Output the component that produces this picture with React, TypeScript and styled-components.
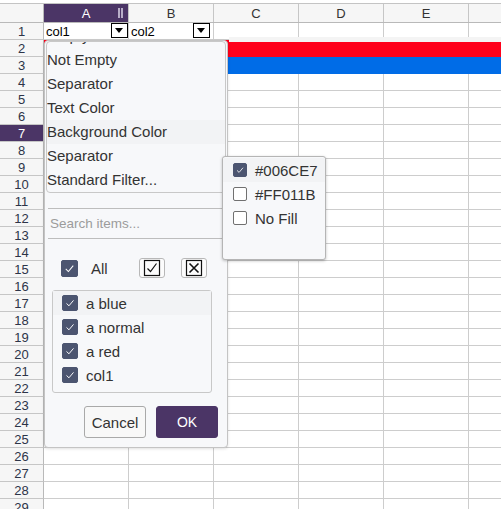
import { FC } from 'react';
import styled, { createGlobalStyle } from 'styled-components';

const GlobalStyle = createGlobalStyle`
  html, body {
    margin: 0;
    padding: 0;
    background: #fff;
  }
  body {
    font-family: "Liberation Sans", Arial, sans-serif;
    overflow: hidden;
  }
  * {
    box-sizing: border-box;
  }
`;

const COLUMNS = ['A', 'B', 'C', 'D', 'E', ''];
const ROW_COUNT = 29;
const ROW_FILLS: Record<number, string> = { 2: '#ff011b', 3: '#006ce7' };
const MENU_ITEMS = ['Empty', 'Not Empty', 'Separator', 'Text Color', 'Background Color', 'Separator', 'Standard Filter...'];
const VALUES = ['a blue', 'a normal', 'a red', 'col1'];
const COLORS = [
  { label: '#006CE7', checked: true },
  { label: '#FF011B', checked: false },
  { label: 'No Fill', checked: false },
];

const CheckMark: FC<{ size: number }> = ({ size }) => (
  <svg width={size} height={size} viewBox="0 0 16 16">
    <polyline points="4,8.5 6.8,11.2 12,5" fill="none" stroke="#fff" strokeWidth="1.1" />
  </svg>
);

const CheckBox: FC<{ size: number; checked: boolean }> = ({ size, checked }) => (
  <StyledCheckBox $size={size} $checked={checked}>
    {checked && <CheckMark size={size - 2} />}
  </StyledCheckBox>
);

export default function App() {
  const rows = Array.from({ length: ROW_COUNT }, (_, i) => i + 1);

  return (
    <>
      <GlobalStyle />
      <StyledPage>
        <StyledTopStrip />
        <StyledHeaderRow>
          <StyledCorner />
          {COLUMNS.map((col, i) => (
            <StyledColHeader key={i} $active={col === 'A'}>
              {col}
              {col === 'A' && <StyledGrip />}
            </StyledColHeader>
          ))}
        </StyledHeaderRow>

        {rows.map((row) => (
          <StyledRow key={row}>
            <StyledRowHeader $active={row === 7}>{row}</StyledRowHeader>
            {COLUMNS.map((_, i) => (
              <StyledCell key={i} $fill={ROW_FILLS[row]}>
                {row === 1 && i < 2 && (
                  <>
                    <span>{i === 0 ? 'col1' : 'col2'}</span>
                    <StyledDropButton $gap={i === 0 ? 0 : 3} />
                  </>
                )}
              </StyledCell>
            ))}
          </StyledRow>
        ))}

        <StyledRepaintBand />

        <StyledFilterPopup>
          <StyledMenuList>
            <StyledMenuScroll>
              {MENU_ITEMS.map((item, i) => (
                <StyledMenuItem key={i} $hover={item === 'Background Color'}>
                  {item}
                </StyledMenuItem>
              ))}
            </StyledMenuScroll>
          </StyledMenuList>

          <StyledSearch placeholder="Search items..." readOnly />

          <StyledAllRow>
            <CheckBox size={17} checked />
            <StyledAllLabel>All</StyledAllLabel>
            <StyledToolButtons>
              <StyledToolButton>
                <svg width="18" height="18" viewBox="0 0 18 18">
                  <rect x="1.5" y="1.5" width="15" height="15" fill="none" stroke="#111" strokeWidth="1.2" />
                  <polyline points="4.5,9.5 7.5,12.5 13.5,4.5" fill="none" stroke="#111" strokeWidth="1.2" />
                </svg>
              </StyledToolButton>
              <StyledToolButton>
                <svg width="18" height="18" viewBox="0 0 18 18">
                  <rect x="1.5" y="1.5" width="15" height="15" fill="none" stroke="#111" strokeWidth="1.2" />
                  <path d="M4.5 4.5 L13.5 13.5 M13.5 4.5 L4.5 13.5" fill="none" stroke="#111" strokeWidth="1.6" />
                </svg>
              </StyledToolButton>
            </StyledToolButtons>
          </StyledAllRow>

          <StyledValueList>
            {VALUES.map((value, i) => (
              <StyledValueItem key={value} $hover={i === 0}>
                <CheckBox size={16} checked />
                <span>{value}</span>
              </StyledValueItem>
            ))}
          </StyledValueList>

          <StyledButtonRow>
            <StyledButton>Cancel</StyledButton>
            <StyledButton $primary>OK</StyledButton>
          </StyledButtonRow>
        </StyledFilterPopup>

        <StyledColorMenu>
          {COLORS.map((color, i) => (
            <StyledColorItem key={color.label} $hover={i === 0}>
              <CheckBox size={14} checked={color.checked} />
              <span>{color.label}</span>
            </StyledColorItem>
          ))}
        </StyledColorMenu>
      </StyledPage>
    </>
  );
}

const StyledPage = styled.div`
  position: relative;
  width: 501px;
  height: 509px;
  overflow: hidden;
  background: #fff;
`;

const StyledTopStrip = styled.div`
  height: 4px;
  background: #fff;
  border-bottom: 1px solid #c4c4c4;
`;

const StyledHeaderRow = styled.div`
  display: flex;
  height: 19px;
  border-bottom: 1px solid #b9b9b9;
  background: #f6f6f6;
`;

const StyledCorner = styled.div`
  flex: none;
  width: 44px;
  border-right: 1px solid #b9b9b9;
`;

const StyledColHeader = styled.div<{ $active?: boolean }>`
  position: relative;
  flex: none;
  width: 85px;
  display: flex;
  align-items: center;
  justify-content: center;
  border-right: 1px solid #c6c6c6;
  font-size: 13px;
  color: ${(p) => (p.$active ? '#fff' : '#333')};
  background: ${(p) => (p.$active ? '#4b3566' : 'transparent')};
`;

const StyledGrip = styled.span`
  position: absolute;
  right: 5px;
  top: 4px;
  width: 5px;
  height: 10px;
  border-left: 2px solid #b8aec8;
  border-right: 2px solid #b8aec8;
`;

const StyledRow = styled.div`
  display: flex;
  height: 17px;
`;

const StyledRowHeader = styled.div<{ $active?: boolean }>`
  flex: none;
  width: 44px;
  display: flex;
  align-items: center;
  justify-content: center;
  border-right: 1px solid #b9b9b9;
  border-bottom: 1px solid #c6c6c6;
  font-size: 13px;
  color: ${(p) => (p.$active ? '#fff' : '#2d3448')};
  background: ${(p) => (p.$active ? '#4b3566' : '#f6f6f6')};
`;

const StyledCell = styled.div<{ $fill?: string }>`
  flex: none;
  width: 85px;
  display: flex;
  align-items: center;
  padding-left: 2px;
  font-size: 13px;
  color: #000;
  background: ${(p) => p.$fill ?? '#fff'};
  border-right: 1px solid ${(p) => p.$fill ?? '#cdcdcd'};
  border-bottom: 1px solid ${(p) => p.$fill ?? '#cdcdcd'};
`;

const StyledDropButton = styled.span<{ $gap: number }>`
  position: relative;
  margin-left: auto;
  margin-right: ${(p) => p.$gap}px;
  width: 17px;
  height: 15px;
  align-self: flex-start;
  border: 1px solid #000;
  background: #fff;

  &::after {
    content: '';
    position: absolute;
    left: 3px;
    top: 4px;
    border-left: 4px solid transparent;
    border-right: 4px solid transparent;
    border-top: 5px solid #000;
  }
`;

const StyledRepaintBand = styled.div`
  position: absolute;
  left: 229px;
  right: 0;
  top: 37px;
  height: 5px;
  background: #f4f4f4;
`;

const StyledFilterPopup = styled.div`
  position: absolute;
  left: 44px;
  top: 40px;
  width: 184px;
  height: 408px;
  display: flex;
  flex-direction: column;
  background: #f7f8fa;
  border: 1px solid #c4c4c4;
  border-radius: 4px;
  box-shadow: 0 1px 3px rgba(0, 0, 0, 0.12);
`;

const StyledMenuList = styled.div`
  margin: 0 1px 0 1px;
  height: 152px;
  border: 1px solid #c8c8c8;
  border-radius: 4px;
  overflow: hidden;
`;

const StyledMenuScroll = styled.div`
  margin-top: -18px;
`;

const StyledMenuItem = styled.div<{ $hover?: boolean }>`
  height: 24px;
  line-height: 24px;
  font-size: 15px;
  color: #333;
  white-space: nowrap;
  background: ${(p) => (p.$hover ? '#f2f3f5' : 'transparent')};
`;

const StyledSearch = styled.input`
  margin: 15px 2px 0 3px;
  height: 31px;
  padding: 0 2px;
  border: none;
  border-top: 1px solid #bdbdbd;
  border-bottom: 1px solid #bdbdbd;
  background: transparent;
  font-family: "Liberation Sans", Arial, sans-serif;
  font-size: 13.5px;
  outline: none;

  &::placeholder {
    color: #9c9c9c;
  }
`;

const StyledAllRow = styled.div`
  display: flex;
  align-items: center;
  height: 20px;
  margin-top: 19px;
  padding-left: 16px;
  padding-right: 20px;
`;

const StyledAllLabel = styled.span`
  margin-left: 13px;
  font-size: 15px;
  color: #333;
`;

const StyledToolButtons = styled.div`
  display: flex;
  gap: 16px;
  margin-left: auto;
`;

const StyledToolButton = styled.button`
  width: 26px;
  height: 20px;
  padding: 0;
  display: flex;
  align-items: center;
  justify-content: center;
  border: 1px solid #b8b8b8;
  border-radius: 3px;
  background: #fcfcfc;
`;

const StyledCheckBox = styled.span<{ $size: number; $checked: boolean }>`
  flex: none;
  display: flex;
  align-items: center;
  justify-content: center;
  width: ${(p) => p.$size}px;
  height: ${(p) => p.$size}px;
  border-radius: 2px;
  border: 1px solid ${(p) => (p.$checked ? '#4c5570' : '#707070')};
  background: ${(p) => (p.$checked ? '#4c5570' : '#fff')};
`;

const StyledValueList = styled.div`
  margin: 12px 0 0 7px;
  width: 160px;
  height: 103px;
  border: 1px solid #c8c8c8;
  border-radius: 3px;
`;

const StyledValueItem = styled.div<{ $hover?: boolean }>`
  display: flex;
  align-items: center;
  gap: 8px;
  height: 24px;
  padding-left: 9px;
  font-size: 15px;
  color: #333;
  background: ${(p) => (p.$hover ? '#f2f3f5' : 'transparent')};
`;

const StyledButtonRow = styled.div`
  display: flex;
  gap: 10px;
  margin-top: 13px;
  padding-left: 39px;
`;

const StyledButton = styled.button<{ $primary?: boolean }>`
  width: 62px;
  height: 32px;
  padding: 0;
  border-radius: 3px;
  font-family: "Liberation Sans", Arial, sans-serif;
  font-size: ${(p) => (p.$primary ? '14px' : '15px')};
  color: ${(p) => (p.$primary ? '#fff' : '#333')};
  background: ${(p) => (p.$primary ? '#4b3566' : '#f8f8f8')};
  border: 1px solid ${(p) => (p.$primary ? '#4b3566' : '#a9a9a9')};
`;

const StyledColorMenu = styled.div`
  position: absolute;
  left: 222px;
  top: 156px;
  width: 104px;
  height: 104px;
  padding-top: 1px;
  background: #f7f8fa;
  border: 1px solid #b5b5b5;
  border-radius: 3px;
  box-shadow: 0 1px 3px rgba(0, 0, 0, 0.25);
`;

const StyledColorItem = styled.div<{ $hover?: boolean }>`
  display: flex;
  align-items: center;
  gap: 8px;
  height: 24px;
  padding-left: 10px;
  font-size: 15px;
  color: #333;
  background: ${(p) => (p.$hover ? '#f2f3f5' : 'transparent')};
`;
